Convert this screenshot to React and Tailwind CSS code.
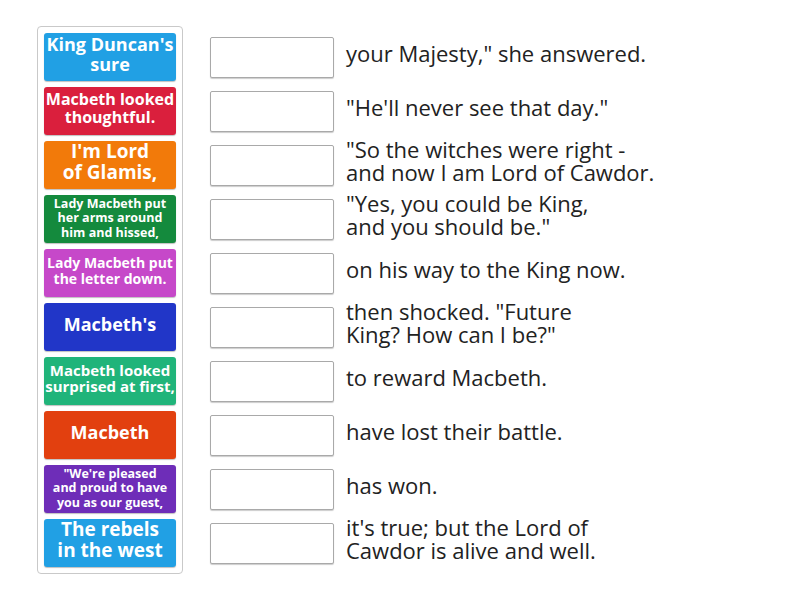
import React from "react";

const tiles = [
  { lines: ["King Duncan's", "sure"], bg: "bg-[#21a0e4]", cls: "text-[18px] leading-[20px] pb-[7px]" },
  { lines: ["Macbeth looked", "thoughtful."], bg: "bg-[#da1f3d]", cls: "text-[16px] leading-[18px] pb-[7px]" },
  { lines: ["I'm Lord", "of Glamis,"], bg: "bg-[#f27a0a]", cls: "text-[19px] leading-[21px] pb-[7px]" },
  { lines: ["Lady Macbeth put", "her arms around", "him and hissed,"], bg: "bg-[#148a3d]", cls: "text-[12.5px] leading-[14.5px] pb-[1px]" },
  { lines: ["Lady Macbeth put", "the letter down."], bg: "bg-[#c648c9]", cls: "text-[14px] leading-[16px] pb-[5px]" },
  { lines: ["Macbeth's"], bg: "bg-[#2136c8]", cls: "text-[18px] leading-[20px] pb-[7px]" },
  { lines: ["Macbeth looked", "surprised at first,"], bg: "bg-[#20b47a]", cls: "text-[15px] leading-[16.5px] pb-[6px]" },
  { lines: ["Macbeth"], bg: "bg-[#e2400f]", cls: "text-[18px] leading-[20px] pb-[7px]" },
  { lines: ["\"We're pleased", "and proud to have", "you as our guest,"], bg: "bg-[#6e2db8]", cls: "text-[12.5px] leading-[14.5px] pb-[1px]" },
  { lines: ["The rebels", "in the west"], bg: "bg-[#21a0e4]", cls: "text-[19px] leading-[21px] pb-[7px]" },
];

const answers = [
  ["your Majesty,\" she answered."],
  ["\"He'll never see that day.\""],
  ["\"So the witches were right -", "and now I am Lord of Cawdor."],
  ["\"Yes, you could be King,", "and you should be.\""],
  ["on his way to the King now."],
  ["then shocked. \"Future", "King? How can I be?\""],
  ["to reward Macbeth."],
  ["have lost their battle."],
  ["has won."],
  ["it's true; but the Lord of", "Cawdor is alive and well."],
];

export default function App() {
  return (
    <div
      className="w-[800px] h-[600px] bg-white flex items-start"
      style={{ fontFamily: '"Open Sans", "Noto Sans", sans-serif' }}
    >
      <div className="ml-[37px] mt-[26px] w-[146px] border border-[#c9c9c9] rounded-[4px] p-[6px] flex flex-col gap-[6px] bg-white">
        {tiles.map((t, i) => (
          <div
            key={i}
            className={`${t.bg} h-[48px] rounded-[3px] flex flex-col items-center justify-center text-white font-bold text-center ${t.cls} shadow-[0_1px_1px_rgba(0,0,0,0.25)]`}
          >
            {t.lines.map((l, j) => (
              <span key={j} className="whitespace-nowrap">{l}</span>
            ))}
          </div>
        ))}
      </div>
      <div className="ml-[27px] mt-[33px] flex flex-col gap-[6px]">
        {answers.map((a, i) => (
          <div key={i} className="h-[48px] flex items-center">
            <div className="w-[124px] h-[41px] border border-[#a9a9a9] rounded-[2px] bg-white shadow-[0_1px_1px_rgba(0,0,0,0.2)]" />
            <div className="ml-[12px] -mt-[8px] text-[22px] leading-[23px] text-[#222222]">
              {a.map((l, j) => (
                <div key={j} className="whitespace-nowrap">{l}</div>
              ))}
            </div>
          </div>
        ))}
      </div>
    </div>
  );
}
